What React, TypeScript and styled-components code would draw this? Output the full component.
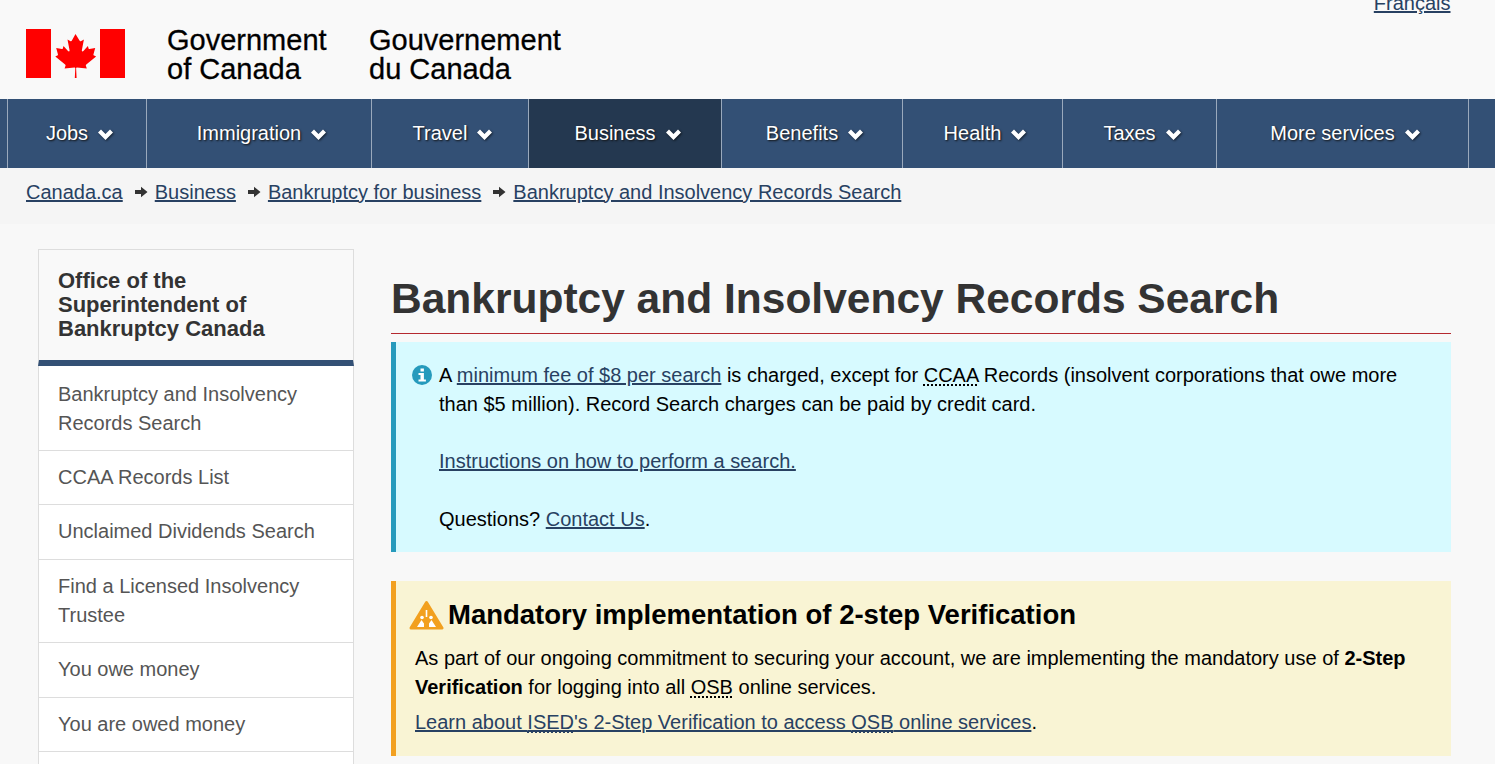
import React from "react";
import styled, { createGlobalStyle } from "styled-components";

const Global = createGlobalStyle`
  html, body { margin: 0; padding: 0; height: 764px; overflow: hidden; background: #f8f8f8; }
  body { font-family: "Liberation Sans", Arial, sans-serif; color: #000; }
`;
const Header = styled.header`
  height: 99px; background: #f9f9f9; position: relative; display: flex; align-items: flex-start;
  padding: 29px 44px 0 26px; box-sizing: border-box; overflow: hidden;
`;
const Flag = styled.svg`width: 99px; height: 49px; flex: none;`;
const Sig = styled.div`
  font-size: 29px; line-height: 29px; color: #000; -webkit-text-stroke: 0.3px #000;
  margin-left: ${p => p.$ml}px; margin-top: -3px; width: ${p => p.$w}px; flex: none;
`;
const Lang = styled.a`
  position: absolute; right: 44.5px; top: -11px; font-size: 20px; line-height: 29px; color: #284162; text-decoration: underline;
`;
const Nav = styled.nav`
  height: 69px; background: #335075; display: flex; padding-left: 7px;
`;
const NavItem = styled.div`
  box-sizing: border-box; width: ${p => p.$w}px; flex: none; height: 69px; padding-left: 5px;
  display: flex; align-items: center; justify-content: center; gap: 10px;
  border-right: 1px solid #9aa9bc; ${p => p.$first ? "border-left: 1px solid #9aa9bc;" : ""}
  background: ${p => p.$active ? "#243850" : "transparent"};
  color: #fff; font-size: 20px; text-shadow: 1px 1px 2px #111;
`;
const Chevron = styled.svg`width: 15px; height: 11px; flex: none; filter: drop-shadow(1px 1px 1px rgba(0,0,0,.6)); margin-top: 1px;`;
const Crumbs = styled.div`
  height: 56px; background: #f5f5f5; display: flex; align-items: center; padding: 0 0 8px 26px; box-sizing: border-box; font-size: 20px;
`;
const CrumbLink = styled.a`color: #284162; text-decoration: underline;`;
const CrumbArrow = styled.svg`width: 14px; height: 12px; margin: 0 7px 0 11px; flex: none;`;
const Body = styled.div`
  display: flex; padding: 25px 44px 0 38px; align-items: flex-start; gap: 37px;
`;
const Side = styled.aside`
  width: 316px; box-sizing: border-box; flex: none;
`;
const SideTitle = styled.div`
  background: #f9f9f9; padding: 19px 19px 19px; font-weight: 700; font-size: 22px; line-height: 24px; color: #333;
  border: 1px solid #ddd; border-bottom: 6px solid #335075;
`;
const SideItem = styled.div`
  padding: 12px 19px 12.4px; font-size: 20px; line-height: 29px; color: #555; background: #fff;
  border: 1px solid #ddd; border-top: none;
  &:nth-child(2) { padding-top: 14px; padding-bottom: 12px; }
`;
const Main = styled.main`width: 1060px; flex: none;`;
const Title = styled.h1`
  margin: 25px 0 8px; font-size: 42.5px; line-height: 50px; font-weight: 700; color: #333; padding-bottom: 9px; border-bottom: 1px solid #b5292f;
`;
const Info = styled.section`
  background: #d7faff; border-left: 5px solid #269abc; padding: 19px 43px 19px 43px; font-size: 20px; line-height: 29px; position: relative; height: 210px; box-sizing: border-box;
`;
const InfoIcon = styled.svg`position: absolute; left: 16px; top: 23px; width: 20px; height: 20px;`;
const Warn = styled.section`
  margin-top: 29px; background: #f9f4d4; border-left: 5px solid #f2a01f; padding: 15px 19px 0; height: 175px; box-sizing: border-box; font-size: 20px; line-height: 29px;
`;
const WarnHead = styled.h2`
  margin: 0 0 10px -6px; display: flex; align-items: center; gap: 4px; font-size: 27.5px; line-height: 38px; font-weight: 700; color: #000;
`;
const WarnIcon = styled.svg`width: 35px; height: 31px; flex: none;`;
const Text = styled.p`margin: 0;`;
const Gap = styled.p`margin: 28.4px 0 0;`;
const LearnLine = styled.p`margin: 6px 0 0;`;
const Link = styled.a`color: #284162; text-decoration: underline;`;
const Abbr = styled.abbr`text-decoration: underline dotted; text-underline-offset: 2px;`;

const Chev = () => (
  <Chevron viewBox="0 0 15 11"><path d="M0 3.400 L3 .4 L7.500 4.900 L12 .4 L15 3.400 L7.500 10.900 Z" fill="#fff" /></Chevron>
);
const Arrow = () => (
  <CrumbArrow viewBox="0 0 14 12"><path d="M1 4h6V.8L13.500 6 7 11.200V8H1z" fill="#333" /></CrumbArrow>
);
const navs: [string, number][] = [["Jobs",140],["Immigration",225],["Travel",157],["Business",193],["Benefits",181],["Health",160],["Taxes",154],["More services",252]];
const items = [
  <>Bankruptcy and Insolvency<br/>Records Search</>, "CCAA Records List", "Unclaimed Dividends Search",
  <>Find a Licensed Insolvency<br/>Trustee</>, "You owe money", "You are owed money", "Forms",
];
export default function App() {
  return (
    <>
      <Global />
      <Header>
        <Flag viewBox="0 0 99 49">
          <rect x="0" y="0" width="25" height="49" fill="#f00" />
          <rect x="74" y="0" width="25" height="49" fill="#f00" />
          <path fill="#f00" d="M49.5 5l-3.6 6.6c-.4.7-1.1.7-1.8.3l-2.6-1.4 2 10.400c.4 1.900-.9 1.900-1.500 1.100l-4.500-5-.7 2.500c-.1.300-.4.700-.9.600l-5.700-1.200 1.500 5.500c.3 1.200.6 1.700-.4 2l-2 1 9.800 8c.4.300.6.900.4 1.400l-.9 2.800 9.900-1.200c.3 0 .8.300.8.600l-.5 10.100h1.800l-.5-10.100c0-.3.500-.6.800-.6l9.900 1.200-.9-2.800c-.2-.5 0-1.100.4-1.400l9.800-8-2-1c-1-.3-.7-.8-.4-2l1.500-5.500-5.700 1.200c-.5.100-.8-.3-.9-.6l-.7-2.500-4.500 5c-.6.800-1.900.8-1.500-1.100l2-10.400-2.600 1.400c-.7.400-1.400.4-1.800-.3z" />
        </Flag>
        <Sig $ml={42} $w={202}>Government<br/>of Canada</Sig>
        <Sig $ml={0}  $w={220}>Gouvernement<br/>du Canada</Sig>
        <Lang>Français</Lang>
      </Header>
      <Nav>
        {navs.map(([n, w], i) => (
          <NavItem key={n} $w={w} $first={i === 0} $active={n === "Business"}>{n}<Chev /></NavItem>
        ))}
      </Nav>
      <Crumbs>
        <CrumbLink>Canada.ca</CrumbLink><Arrow />
        <CrumbLink>Business</CrumbLink><Arrow />
        <CrumbLink>Bankruptcy for business</CrumbLink><Arrow />
        <CrumbLink>Bankruptcy and Insolvency Records Search</CrumbLink>
      </Crumbs>
      <Body>
        <Side>
          <SideTitle>Office of the<br/>Superintendent of<br/>Bankruptcy Canada</SideTitle>
          {items.map((it, i) => <SideItem key={i}>{it}</SideItem>)}
        </Side>
        <Main>
          <Title>Bankruptcy and Insolvency Records Search</Title>
          <Info>
            <InfoIcon viewBox="0 0 20 20">
              <circle cx="10" cy="10" r="10" fill="#269abc" />
              <rect x="8.500" y="3.500" width="3.400" height="3" fill="#fff" />
              <path d="M6.500 8h5.400v6.500h2v2H6.500v-2h2v-4.500h-2z" fill="#fff" />
            </InfoIcon>
            <Text>A <Link>minimum fee of $8 per search</Link> is charged, except for <Abbr>CCAA</Abbr> Records (insolvent corporations that owe more than $5 million). Record Search charges can be paid by credit card.</Text>
            <Gap><Link>Instructions on how to perform a search.</Link></Gap>
            <Gap>Questions? <Link>Contact Us</Link>.</Gap>
          </Info>
          <Warn>
            <WarnHead>
              <WarnIcon viewBox="0 0 35 31">
                <path d="M17.500 2.500 L33 28 H2 Z" fill="#f2a01f" stroke="#f2a01f" strokeWidth="3" strokeLinejoin="round" />
                <path d="M8 27l4.500-7 2.500 3.500V27zM27 27l-4.500-7-2.500 3.500V27z" fill="#fff" />
                <circle cx="13" cy="17.500" r="1.800" fill="#fff" /><circle cx="22" cy="17.500" r="1.800" fill="#fff" />
                <rect x="16.700" y="10" width="1.600" height="7" fill="#fff" />
              </WarnIcon>
              Mandatory implementation of 2-step Verification
            </WarnHead>
            <Text>As part of our ongoing commitment to securing your account, we are implementing the mandatory use of <b>2-Step Verification</b> for logging into all <Abbr>OSB</Abbr> online services.</Text>
            <LearnLine><Link>Learn about <Abbr>ISED</Abbr>'s 2-Step Verification to access <Abbr>OSB</Abbr> online services</Link>.</LearnLine>
          </Warn>
        </Main>
      </Body>
    </>
  );
}
